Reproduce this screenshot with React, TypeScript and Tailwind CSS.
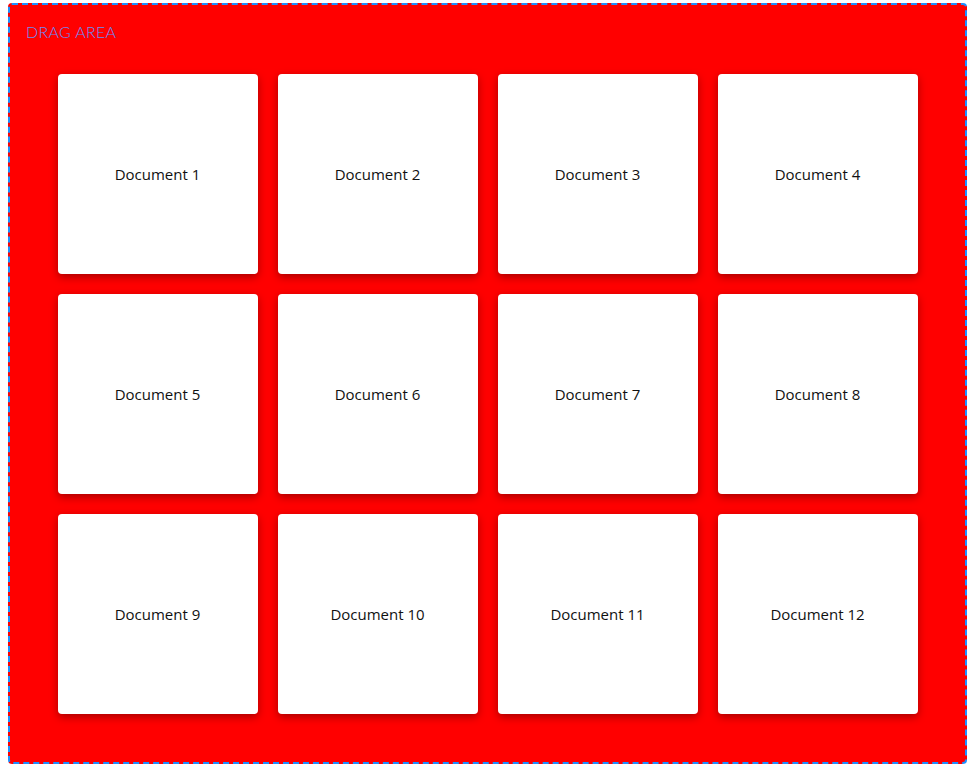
export default function App() {
  const docs = Array.from({ length: 12 }, (_, i) => `Document ${i + 1}`);
  return (
    <div className="pt-[3px] pl-[8px]">
      <div className="w-[959px] h-[761px] bg-[#ff0000] border-2 border-dashed border-[#1e90ff] rounded-[4px] box-border px-[16px] pt-[17px]">
        <div className="text-[16px] leading-[20px] font-light text-[#6a8cf5] tracking-[0.3px]" style={{ fontFamily: 'Lato, "Open Sans", sans-serif' }}>
          DRAG AREA
        </div>
        <div className="mt-[32px] flex justify-center">
          <div className="grid grid-cols-[repeat(4,200px)] gap-[20px]">
            {docs.map((d) => (
              <div
                key={d}
                className="w-[200px] h-[200px] bg-white rounded-[4px] flex items-center justify-center shadow-[0_3px_8px_rgba(0,0,0,0.35)] text-[15px] text-[#111]"
                style={{ fontFamily: '"Open Sans", "Noto Sans", sans-serif' }}
              >
                {d}
              </div>
            ))}
          </div>
        </div>
      </div>
    </div>
  );
}
